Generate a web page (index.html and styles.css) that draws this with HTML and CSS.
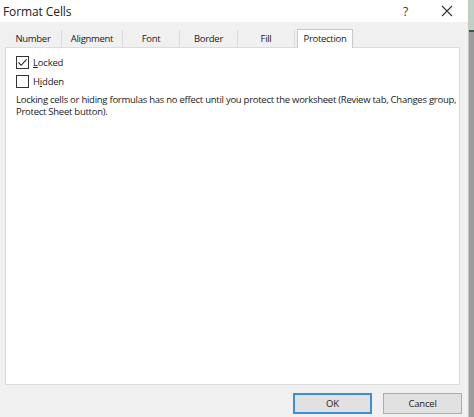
FILE: index.html
```html
<!DOCTYPE html>
<html>
<head>
<meta charset="utf-8">
<link rel="stylesheet" href="styles.css">
</head>
<body>
<div class="screen">
  <div class="dialog">
    <div class="titlebar">
      <span class="title">Format Cells</span>
      <span class="help">?</span>
      <span class="close">
        <svg width="12" height="12" viewBox="0 0 12 12"><path d="M1 1 L11 11 M11 1 L1 11" stroke="#333" stroke-width="1.1" fill="none"/></svg>
      </span>
    </div>
    <div class="body">
      <div class="tabs">
        <div class="tab w57">Number</div>
        <div class="tab w61">Alignment</div>
        <div class="tab w57">Font</div>
        <div class="tab w58">Border</div>
        <div class="tab w57 last">Fill</div>
        <div class="tab active">Protection</div>
      </div>
      <div class="panel">
        <label class="check">
          <span class="box checked">
            <svg width="11" height="11" viewBox="0 0 11 11"><path d="M1.5 5.5 L4.2 8.3 L9.6 2.4" stroke="#222" stroke-width="1.1" fill="none"/></svg>
          </span>
          <span><u>L</u>ocked</span>
        </label>
        <label class="check">
          <span class="box"></span>
          <span>H<u>i</u>dden</span>
        </label>
        <p class="note">Locking cells or hiding formulas has no effect until you protect the worksheet (Review tab, Changes group, Protect Sheet button).</p>
      </div>
      <div class="buttons">
        <button class="btn primary">OK</button>
        <button class="btn">Cancel</button>
      </div>
    </div>
  </div>
  <div class="strip">
    <div class="strip-top"></div>
    <div class="strip-line"></div>
    <div class="strip-rest"></div>
  </div>
</div>
</body>
</html>
```
FILE: styles.css
```css
html, body {
  margin: 0;
  padding: 0;
  width: 474px;
  height: 417px;
  overflow: hidden;
  font-family: "Open Sans", "Noto Sans", sans-serif;
  font-size: 9.5px;
  letter-spacing: -0.2px;
  color: #1a1a1a;
}
.screen {
  display: flex;
  width: 474px;
  height: 417px;
}
.dialog {
  width: 469px;
  display: flex;
  flex-direction: column;
  background: #f0f0f0;
}
.titlebar {
  height: 22px;
  background: #ffffff;
  display: flex;
  align-items: center;
}
.title {
  margin-left: 3px;
  font-size: 12px;
  letter-spacing: -0.1px;
  color: #222;
}
.help {
  margin-left: auto;
  margin-right: 33px;
  font-size: 12px;
  color: #333;
}
.close {
  margin-right: 15px;
  display: flex;
}
.body {
  flex: 1;
  display: flex;
  flex-direction: column;
  padding: 7px 8px 0 5px;
}
.tabs {
  display: flex;
  height: 18px;
  align-items: flex-end;
}
.tab {
  height: 17px;
  line-height: 17px;
  text-align: center;
  border-right: 1px solid #dadada;
  box-sizing: border-box;
  color: #222;
  letter-spacing: -0.3px;
}
.w57 { width: 57px; }
.w61 { width: 61px; }
.w58 { width: 58px; }
.tab.last { margin-right: 2px; }
.tab.active {
  width: 56px;
  height: 19px;
  line-height: 17px;
  background: #ffffff;
  border: 1px solid #c8c8c8;
  border-bottom: none;
  margin-bottom: -1px;
  position: relative;
  z-index: 1;
}
.panel {
  height: 338px;
  background: #ffffff;
  border: 1px solid #dcdcdc;
  box-sizing: border-box;
  padding: 5px 0 0 10px;
}
.check {
  display: flex;
  align-items: center;
  gap: 4px;
  height: 19px;
  color: #222;
}
.check u { text-decoration: underline; text-underline-offset: 1px; }
.box {
  width: 11px;
  height: 11px;
  border: 1px solid #333;
  background: #fff;
  display: flex;
}
.note {
  margin: 3px 0 0 0;
  line-height: 12px;
  letter-spacing: -0.26px;
  color: #222;
}
.buttons {
  display: flex;
  justify-content: flex-end;
  gap: 11px;
  padding-top: 8px;
  margin-right: -2px;
}
.btn {
  width: 79px;
  height: 21px;
  background: #e1e1e1;
  border: 1px solid #adadad;
  font-family: inherit;
  font-size: 9.5px;
  letter-spacing: -0.2px;
  color: #222;
  padding: 0;
}
.btn.primary {
  border: 2px solid #3c8fd6;
}
.strip {
  width: 5px;
  display: flex;
  flex-direction: column;
  border-left: 1px solid #c4c4c4;
}
.strip-top {
  height: 30px;
  background: #bcd3c4;
}
.strip-line {
  height: 2px;
  background: #2e5e44;
}
.strip-rest {
  flex: 1;
  background: #9c9c9c;
}
```
